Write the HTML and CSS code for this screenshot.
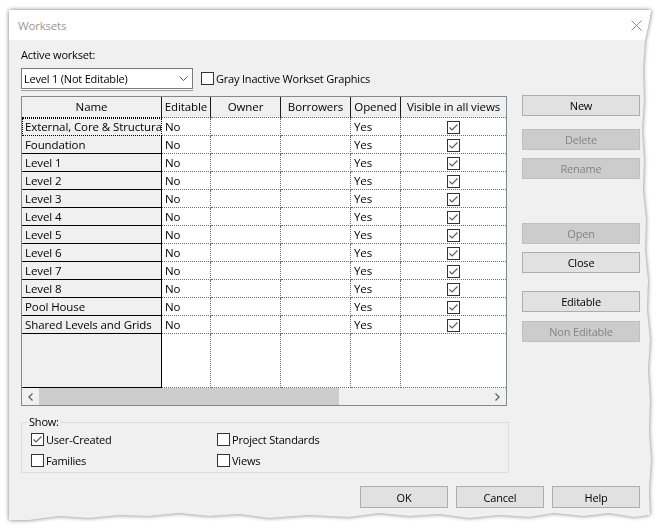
FILE: index.html
```html
<!DOCTYPE html>
<html lang="en">
<head>
    <meta charset="UTF-8">
    <title>Worksets</title>
    <link rel="stylesheet" href="styles.css">
</head>
<body>
    <div class="desk">
        <div class="frame">
            <div class="dialog">
                <div class="titlebar">
                    <span class="title">Worksets</span>
                    <svg class="close" width="11" height="11" viewBox="0 0 11 11"><path d="M0.5 0.5L10.5 10.5M10.5 0.5L0.5 10.5" /></svg>
                </div>

                <div class="body">
                    <div class="active-label">Active workset:</div>
                    <div class="toprow">
                        <div class="combo">
                            <span>Level 1 (Not Editable)</span>
                            <svg width="9" height="5" viewBox="0 0 9 5"><path d="M0.5 0.5L4.5 4.5L8.5 0.5" /></svg>
                        </div>
                        <div class="check gray-opt"><span class="cb"></span>Gray Inactive Workset Graphics</div>
                    </div>

                    <div class="main">
                        <div class="grid">
                            <table>
                                <thead>
                                    <tr>
                                        <th class="c-name focus-top">Name</th>
                                        <th class="c-edit">Editable</th>
                                        <th class="c-owner">Owner</th>
                                        <th class="c-borr">Borrowers</th>
                                        <th class="c-open">Opened</th>
                                        <th class="c-vis">Visible in all views</th>
                                    </tr>
                                </thead>
                                <tbody id="rows"></tbody>
                            </table>
                            <div class="hscroll">
                                <div class="arrow"><svg width="5" height="8" viewBox="0 0 5 8"><path d="M4.5 0.5L1 4L4.5 7.5" /></svg></div>
                                <div class="track"><div class="thumb"></div></div>
                                <div class="arrow"><svg width="5" height="8" viewBox="0 0 5 8"><path d="M0.5 0.5L4 4L0.5 7.5" /></svg></div>
                            </div>
                        </div>

                        <div class="side">
                            <button class="btn">New</button>
                            <button class="btn mt13" disabled>Delete</button>
                            <button class="btn mt8" disabled>Rename</button>
                            <button class="btn mt44" disabled>Open</button>
                            <button class="btn mt8">Close</button>
                            <button class="btn mt18">Editable</button>
                            <button class="btn mt9" disabled>Non Editable</button>
                        </div>
                    </div>

                    <fieldset class="show">
                        <legend>Show:</legend>
                        <div class="opts">
                            <div class="check"><span class="cb on"><svg width="11" height="11" viewBox="0 0 11 11"><path d="M1.5 5.5L4 8L9.5 2.5" /></svg></span>User-Created</div>
                            <div class="check"><span class="cb"></span>Project Standards</div>
                            <div class="check"><span class="cb"></span>Families</div>
                            <div class="check"><span class="cb"></span>Views</div>
                        </div>
                    </fieldset>

                    <div class="footer">
                        <button class="btn wide">OK</button>
                        <button class="btn wide">Cancel</button>
                        <button class="btn wide">Help</button>
                    </div>
                </div>
            </div>
        </div>
    </div>

    <script>
        const worksets = [
            'External, Core & Structura',
            'Foundation',
            'Level 1',
            'Level 2',
            'Level 3',
            'Level 4',
            'Level 5',
            'Level 6',
            'Level 7',
            'Level 8',
            'Pool House',
            'Shared Levels and Grids'
        ];

        const tick = '<span class="cb"><svg width="11" height="11" viewBox="0 0 11 11"><path d="M1.5 5.5L4 8L9.5 2.5" /></svg></span>';
        const body = document.getElementById('rows');

        worksets.forEach(function(name, i) {
            const tr = document.createElement('tr');
            tr.innerHTML =
                '<td class="c-name' + (i === 0 ? ' focus' : '') + '">' + name.replace('&', '&amp;') + '</td>' +
                '<td>No</td><td></td><td></td><td>Yes</td>' +
                '<td class="c-vis">' + tick + '</td>';
            body.appendChild(tr);
        });

        const filler = document.createElement('tr');
        filler.className = 'filler';
        filler.innerHTML = '<td class="c-name"></td><td></td><td></td><td></td><td></td><td class="c-vis"></td>';
        body.appendChild(filler);
    </script>
</body>
</html>
```

FILE: styles.css
```css
body {
    margin: 0;
    background-color: #ffffff;
    font-family: "Open Sans", "Noto Sans", sans-serif;
    font-size: 11px;
    letter-spacing: -0.2px;
    color: #000000;
}
.desk {
    width: 661px;
    height: 530px;
    overflow: hidden;
}
.frame {
    padding: 10px 0 0 9px;
    filter: drop-shadow(0 0 2px rgba(0, 0, 0, 0.55));
}
.dialog {
    width: 646px;
    height: 512px;
    background-color: #f0f0f0;
    clip-path: polygon(0 0, 642px 0, 640px 12px, 636px 30px, 634px 60px, 635px 90px, 633px 120px, 635px 150px, 634px 180px, 637px 210px, 636px 240px, 639px 270px, 638px 300px, 641px 330px, 639px 360px, 641px 390px, 640px 420px, 642px 450px, 640px 480px, 641px 505px, 625px 507px, 600px 503px, 575px 506px, 545px 503px, 520px 507px, 490px 505px, 460px 508px, 430px 504px, 400px 506px, 370px 503px, 340px 507px, 300px 505px, 260px 508px, 230px 504px, 200px 506px, 170px 503px, 140px 506px, 110px 505px, 80px 508px, 50px 506px, 20px 510px, 0 510px);
}

/* barra de titulo */
.titlebar {
    height: 30px;
    background-color: #ffffff;
    display: flex;
    align-items: center;
    justify-content: space-between;
    padding: 0 13px 0 9px;
}
.title {
    color: #999999;
    font-size: 11.5px;
}
.close path {
    stroke: #8c8c8c;
    stroke-width: 1;
    fill: none;
}

.body {
    width: 619px;
    padding: 7px 0 0 12px;
}
.active-label {
    line-height: 15px;
}
.toprow {
    display: flex;
    align-items: center;
    height: 21px;
    margin-top: 6px;
}
.combo {
    width: 172px;
    height: 21px;
    box-sizing: border-box;
    border: 1px solid #7a7a7a;
    background-color: #ffffff;
    box-shadow: 0 1px 0 #ffffff, 0 2px 0 #9a9a9a;
    display: flex;
    align-items: center;
    justify-content: space-between;
    padding: 0 4px 0 2px;
}
.combo path {
    stroke: #555555;
    fill: none;
}
.gray-opt {
    margin-left: 8px;
}

/* casillas */
.check {
    display: flex;
    align-items: center;
    gap: 2px;
    white-space: nowrap;
}
.cb {
    width: 13px;
    height: 13px;
    box-sizing: border-box;
    border: 1px solid #333333;
    background-color: #ffffff;
    display: inline-flex;
    align-items: center;
    justify-content: center;
    vertical-align: middle;
}
.cb path {
    stroke: #5a5a5a;
    stroke-width: 1.1;
    fill: none;
}

/* tabla */
.main {
    display: flex;
    gap: 15px;
    margin-top: 7px;
}
.grid {
    width: 486px;
    height: 310px;
    box-sizing: border-box;
    border: 1px solid #828790;
    background-color: #ffffff;
    display: flex;
    flex-direction: column;
}
table {
    width: 484px;
    border-spacing: 0;
    table-layout: fixed;
    font-size: 11.5px;
    letter-spacing: -0.1px;
}
th, td {
    box-sizing: border-box;
    padding: 0 2px 0 3px;
    white-space: nowrap;
    overflow: hidden;
    border-right: 1px dotted #6d6d6d;
    border-bottom: 1px dotted #6d6d6d;
    text-align: left;
    font-weight: normal;
}
th {
    height: 21px;
    text-align: center;
    background-color: #f0f0f0;
    border-right: 1px solid #1a1a1a;
    padding: 0 2px 1px;
}
td {
    height: 18px;
    line-height: 15px;
    padding-bottom: 1px;
}
.c-name { width: 140px; }
.c-edit { width: 49px; }
.c-owner { width: 70px; }
.c-borr { width: 70px; }
.c-open { width: 50px; }
.c-vis { width: 105px; border-right: none; }
th.c-vis { border-right: none; }
td.c-name {
    background-color: #f0f0f0;
    border-right: 1px solid #000000;
    border-bottom: 1px solid #000000;
    padding-left: 3px;
}
th.focus-top {
    border-bottom: 1px dotted #000000;
}
td.focus {
    border-right: 1px dotted #000000;
    border-bottom: 1px dotted #000000;
    outline: 1px dotted #000000;
    outline-offset: -1px;
}
td.c-vis {
    text-align: center;
    padding: 0;
}
.filler td {
    height: 54px;
}

.hscroll {
    height: 17px;
    display: flex;
    background-color: #f0f0f0;
}
.arrow {
    width: 17px;
    display: flex;
    align-items: center;
    justify-content: center;
}
.arrow path {
    stroke: #606060;
    stroke-width: 1.3;
    fill: none;
}
.track {
    flex: 1;
}
.thumb {
    width: 300px;
    height: 100%;
    background-color: #cdcdcd;
}

/* botones */
.side {
    width: 118px;
    display: flex;
    flex-direction: column;
    margin-top: -1px;
}
.btn {
    width: 118px;
    height: 21px;
    box-sizing: border-box;
    border: 1px solid #adadad;
    background-color: #e1e1e1;
    color: #000000;
    font-family: inherit;
    font-size: inherit;
    letter-spacing: inherit;
    padding: 0;
}
.btn:disabled {
    background-color: #cccccc;
    border-color: #bfbfbf;
    color: #838383;
}
.mt8 { margin-top: 8px; }
.mt9 { margin-top: 9px; }
.mt13 { margin-top: 13px; }
.mt18 { margin-top: 18px; }
.mt44 { margin-top: 44px; }

/* grupo mostrar */
.show {
    width: 488px;
    box-sizing: border-box;
    margin: 9px 0 0;
    padding: 0 0 1px 9px;
    border: 1px solid #dcdcdc;
}
.show legend {
    padding: 0 2px;
    margin-left: -4px;
    line-height: 14px;
}
.opts {
    display: grid;
    grid-template-columns: 186px auto;
    grid-auto-rows: 21px;
}

.footer {
    display: flex;
    justify-content: flex-end;
    gap: 8px;
    margin-top: 13px;
}
.btn.wide {
    width: 88px;
    height: 22px;
}
```
